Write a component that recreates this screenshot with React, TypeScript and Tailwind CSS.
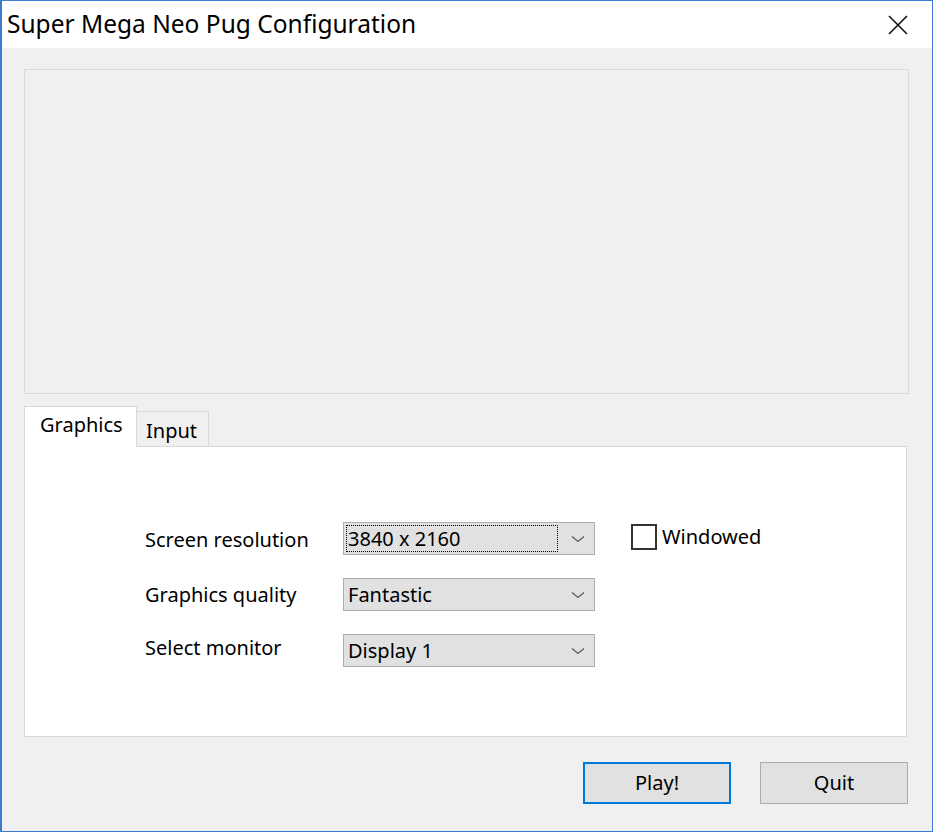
import { useState } from 'react'

const font = { fontFamily: '"Noto Sans", "Open Sans", sans-serif' }

function Chevron() {
  return (
    <svg width="14" height="8" viewBox="0 0 14 8" className="shrink-0">
      <path d="M1 1.5 L7 6.5 L13 1.5" fill="none" stroke="#5a5a5a" strokeWidth="1.2" />
    </svg>
  )
}

function Select({ value, focused }: { value: string; focused?: boolean }) {
  return (
    <div className="w-[252px] h-[33px] border border-[#adadad] bg-[#e1e1e1] flex items-center pl-[2px] pr-[9px]">
      <div
        className={
          'h-[27px] w-[212px] flex items-center pl-[1px] text-[20px] text-black leading-none ' +
          (focused ? 'border border-dotted border-black' : 'border border-transparent')
        }
      >
        {value}
      </div>
      <div className="flex-1" />
      <Chevron />
    </div>
  )
}

export default function App() {
  const [tab, setTab] = useState('graphics')
  const [windowed, setWindowed] = useState(false)

  const rows = [
    { label: 'Screen resolution', value: '3840 x 2160', focused: true, shift: 'mt-[3px]' },
    { label: 'Graphics quality', value: 'Fantastic', shift: 'mt-[1px]' },
    { label: 'Select monitor', value: 'Display 1', shift: '-mt-[5px]' },
  ]

  return (
    <div style={font} className="w-[933px] h-[832px] border border-l-2 border-[#3f79d0] bg-[#f0f0f0] flex flex-col text-black">
      {/* title bar */}
      <div className="h-[47px] bg-white flex items-center justify-between pl-[5px] pr-[24px] shrink-0">
        <span className="text-[24.5px] leading-none">Super Mega Neo Pug Configuration</span>
        <svg width="20" height="20" viewBox="0 0 20 20">
          <path d="M1 1 L19 19 M19 1 L1 19" stroke="#111" strokeWidth="1.6" />
        </svg>
      </div>

      <div className="flex flex-col pl-[22px] pt-[21px]">
        {/* preview area */}
        <div className="w-[885px] h-[325px] border border-[#dadada] bg-[#f0f0f0]" />

        {/* tabs */}
        <div className="flex items-end mt-[11px] h-[41px]">
          <button
            onClick={() => setTab('graphics')}
            className={
              'relative z-10 -mb-px w-[113px] flex items-start pl-[15px] text-[20px] leading-none border border-b-0 border-[#d9d9d9] ' +
              (tab === 'graphics' ? 'h-[41px] bg-white pt-[8px]' : 'h-[35px] bg-[#f0f0f0] pt-[9px]')
            }
          >
            Graphics
          </button>
          <button
            onClick={() => setTab('input')}
            className={
              'w-[73px] -ml-px flex items-start pl-[9px] text-[20px] leading-none border border-b-0 border-[#d9d9d9] ' +
              (tab === 'input' ? 'relative z-10 -mb-px h-[41px] bg-white pt-[8px]' : 'h-[35px] bg-[#f0f0f0] pt-[9px]')
            }
          >
            Input
          </button>
        </div>

        {/* tab panel */}
        <div className="w-[883px] h-[291px] border border-[#d9d9d9] bg-white pl-[120px] pt-[75px]">
          {tab === 'graphics' && (
            <div className="flex items-start">
              <div className="flex flex-col gap-[23px]">
                {rows.map((r) => (
                  <div key={r.label} className="flex items-center h-[33px]">
                    <span className={'w-[198px] text-[20px] leading-none ' + r.shift}>{r.label}</span>
                    <Select value={r.value} focused={r.focused} />
                  </div>
                ))}
              </div>
              <label className="flex items-center ml-[36px] mt-[2px] h-[26px] cursor-pointer">
                <input type="checkbox" className="hidden" checked={windowed} onChange={(e) => setWindowed(e.currentTarget.checked)} />
                <span className="w-[26px] h-[26px] border-2 border-[#333] bg-white flex items-center justify-center">
                  {windowed && (
                    <svg width="16" height="16" viewBox="0 0 16 16">
                      <path d="M2 8 L6 12 L14 3" fill="none" stroke="#333" strokeWidth="2" />
                    </svg>
                  )}
                </span>
                <span className="ml-[5px] text-[20px] leading-none">Windowed</span>
              </label>
            </div>
          )}
        </div>

        {/* buttons */}
        <div className="flex justify-end gap-[29px] mt-[25px] w-[885px] pr-[1px]">
          <button className="w-[148px] h-[42px] border-2 border-[#0078d7] bg-[#e1e1e1] text-[20px]">Play!</button>
          <button className="w-[148px] h-[42px] border border-[#adadad] bg-[#e1e1e1] text-[20px]">Quit</button>
        </div>
      </div>
    </div>
  )
}
